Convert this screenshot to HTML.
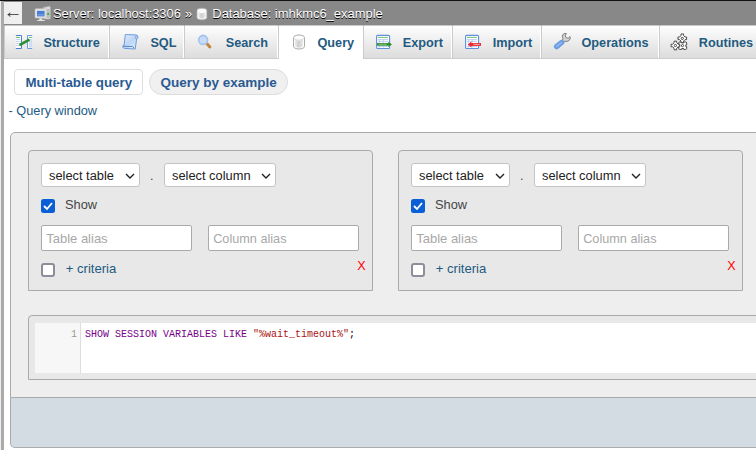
<!DOCTYPE html>
<html><head><meta charset="utf-8">
<style>
*{box-sizing:border-box;}
html,body{margin:0;padding:0;}
body{width:756px;height:450px;overflow:hidden;background:#fff;font-family:"Liberation Sans",sans-serif;font-size:12.6px;color:#444;position:relative;}
#topline{position:absolute;left:0;top:0;width:756px;height:1px;background:#111;}
#leftstrip{position:absolute;left:0;top:1px;width:4px;height:449px;background:#aaa;border-left:1px solid #eee;}
#hdr{position:absolute;left:4px;top:1px;width:752px;height:24px;background:#888;color:#fff;}
#back{position:absolute;left:0;top:1px;width:18px;height:22px;background:#efefef;color:#333;font-size:19px;line-height:22px;text-align:center;overflow:hidden;}
#back span{position:absolute;left:-1px;top:-1px;width:20px;}
.cr{position:absolute;top:0;transform:translateY(.6px);height:24px;line-height:24px;font-size:12.85px;white-space:nowrap;text-shadow:0 1px 0 #000;}
#tabs{position:absolute;left:4px;top:25px;width:752px;height:34px;background:linear-gradient(#fff,#dcdcdc);border-bottom:1px solid #ccc;}
#hline{position:absolute;left:4px;top:25px;width:752px;height:1px;background:rgba(136,136,136,.45);}
.tab{position:absolute;top:0;height:33px;border-left:1px solid #ccc;border-right:1px solid #fff;}
.tab.act{background:#fff;height:34px;}
.tab span{position:absolute;top:0;transform:translateY(.6px);color:#235a81;font-weight:bold;font-size:12.7px;line-height:34px;white-space:nowrap;}
.ic{position:absolute;}
.btn{position:absolute;top:69px;height:26px;border:1px solid #ddd;font-weight:bold;color:#2a5a92;font-size:13.35px;line-height:26px;white-space:nowrap;}
.btn span{position:absolute;top:0;}
#b1{left:14px;width:129px;background:#fff;border-radius:4px;}
#b2{left:149px;width:139px;background:#f0f0f0;border-radius:13px;}
#qw{position:absolute;left:8.500px;top:102px;font-size:12.75px;color:#235a81;line-height:17px;white-space:nowrap;}
#fs{position:absolute;left:10px;top:132px;width:760px;height:266px;background:#eee;border:1px solid #aaa;border-radius:5px 0 0 0;}
#foot{position:absolute;left:10px;top:398px;width:760px;height:50px;background:#d3dce3;border:1px solid #aaa;border-top:0;border-radius:0 0 0 5px;}
.box{position:absolute;top:150px;width:345px;height:141px;background:#e8e8e8;border:1px solid #aaa;border-radius:4px 4px 0 0;}
.sel{position:absolute;top:12px;height:24px;background:#fff;border:1px solid #c4c4c4;border-radius:3px;font-size:12.85px;line-height:24px;color:#222;padding-left:7px;white-space:nowrap;}
.sel svg{position:absolute;right:4.300px;top:8.500px;}
.dot{position:absolute;top:18px;left:121px;font-size:12.6px;color:#444;}
.cb{position:absolute;left:12px;width:14px;height:14px;border-radius:2.5px;}
.cb.on{background:#0b5fd6;top:48px;}
.cb.off{background:#fff;border:2px solid #8f8c9c;border-radius:3px;top:112px;}
.lbl{position:absolute;left:36px;font-size:12.8px;line-height:16px;white-space:nowrap;}
.inp{position:absolute;top:74px;width:151px;height:26px;background:#fff;border:1px solid #aaa;border-radius:2px;font-size:13px;line-height:26px;color:#a8a8a8;padding-left:4.200px;}
.x{position:absolute;left:328.300px;top:107px;color:#f00;font-size:12.6px;line-height:16px;}
#cm{position:absolute;left:28px;top:315px;width:760px;height:65px;background:#e8e8e8;border:1px solid #aaa;border-radius:4px 0 0 0;}
#cm .in{position:absolute;left:6px;top:7px;width:760px;height:50px;background:#fff;}
#cm .gut{position:absolute;left:0;top:0;width:46px;height:50px;background:#f7f7f7;border-right:1px solid #ddd;}
#cm .ln{position:absolute;left:0;top:5px;width:42px;text-align:right;font-family:"Liberation Mono",monospace;font-size:10px;color:#999;line-height:13px;}
#cm .code{position:absolute;left:50px;top:5px;font-family:"Liberation Mono",monospace;font-size:10px;line-height:13px;white-space:pre;color:#000;}
.kw{color:#708;}.st{color:#a11;}
</style></head><body>
<div id="topline"></div>
<div id="leftstrip"></div>
<div id="hdr">
 <div id="back"><span>←</span></div>
 <div class="cr" id="c1" style="left:49px">Server: localhost:3306</div>
 <div class="cr" id="c2" style="left:181px">»</div>
 <div class="cr" id="c3" style="left:208.300px;font-size:12.95px">Database: imhkmc6_example</div>
</div>
<div id="tabs">
 <div class="tab" style="left:0px;width:105px"><span style="left:38.4px">Structure</span></div>
 <div class="tab" style="left:105px;width:75px"><span style="left:40.4px">SQL</span></div>
 <div class="tab" style="left:180px;width:94px"><span style="left:40.7px">Search</span></div>
 <div class="tab act" style="left:274px;width:85px"><span style="left:38.5px">Query</span></div>
 <div class="tab" style="left:359px;width:89px"><span style="left:38.7px">Export</span></div>
 <div class="tab" style="left:448px;width:89px"><span style="left:39.7px">Import</span></div>
 <div class="tab" style="left:537px;width:118px"><span style="left:39.5px">Operations</span></div>
 <div class="tab" style="left:655px;width:101px"><span style="left:38.8px">Routines</span></div>
</div>
<div id="hline"></div>
<div class="btn" id="b1"><span style="left:10.400px">Multi-table query</span></div>
<div class="btn" id="b2"><span style="left:10.500px;font-size:13.5px">Query by example</span></div>
<div id="qw">- Query window</div>
<div id="fs"></div>
<div id="foot"></div>

<div class="box" style="left:28px">
 <div class="sel" style="left:12px;width:99px">select table<svg width="10" height="6" viewBox="0 0 10 6"><path d="M1 1l4 4 4-4" fill="none" stroke="#222" stroke-width="1.4"/></svg></div>
 <div class="dot">.</div>
 <div class="sel" style="left:135px;width:112px">select column<svg width="10" height="6" viewBox="0 0 10 6"><path d="M1 1l4 4 4-4" fill="none" stroke="#222" stroke-width="1.4"/></svg></div>
 <div class="cb on"><svg width="14" height="14" viewBox="0 0 14 14"><path d="M3 7l3 3 5-6" fill="none" stroke="#fff" stroke-width="1.8"/></svg></div>
 <div class="lbl" style="top:46px">Show</div>
 <div class="inp" style="left:12px">Table alias</div>
 <div class="inp" style="left:179px;font-size:12.7px">Column alias</div>
 <div class="cb off"></div>
 <div class="lbl" style="top:110px;left:36.700px;font-size:13.1px;color:#235a81">+ criteria</div>
 <div class="x">X</div>
</div>
<div class="box" style="left:398px">
 <div class="sel" style="left:12px;width:99px">select table<svg width="10" height="6" viewBox="0 0 10 6"><path d="M1 1l4 4 4-4" fill="none" stroke="#222" stroke-width="1.4"/></svg></div>
 <div class="dot">.</div>
 <div class="sel" style="left:135px;width:112px">select column<svg width="10" height="6" viewBox="0 0 10 6"><path d="M1 1l4 4 4-4" fill="none" stroke="#222" stroke-width="1.4"/></svg></div>
 <div class="cb on"><svg width="14" height="14" viewBox="0 0 14 14"><path d="M3 7l3 3 5-6" fill="none" stroke="#fff" stroke-width="1.8"/></svg></div>
 <div class="lbl" style="top:46px">Show</div>
 <div class="inp" style="left:12px">Table alias</div>
 <div class="inp" style="left:179px;font-size:12.7px">Column alias</div>
 <div class="cb off"></div>
 <div class="lbl" style="top:110px;left:36.700px;font-size:13.1px;color:#235a81">+ criteria</div>
 <div class="x">X</div>
</div>
<div id="cm"><div class="in"><div class="gut"></div><div class="ln">1</div><div class="code"><span class="kw">SHOW SESSION VARIABLES LIKE</span> <span class="st">"%wait_timeout%"</span>;</div></div></div>
<svg id="icons" width="756" height="450" viewBox="0 0 756 450" style="position:absolute;left:0;top:0;pointer-events:none">
<defs>
<linearGradient id="gcyl" x1="0" x2="1" y1="0" y2="0"><stop offset="0" stop-color="#f4f4f4"/><stop offset=".5" stop-color="#d8d8d8"/><stop offset="1" stop-color="#f0f0f0"/></linearGradient>
<linearGradient id="gpap" x1="0" x2="1" y1="0" y2="1"><stop offset="0" stop-color="#e8f1fc"/><stop offset=".5" stop-color="#bcd5f5"/><stop offset="1" stop-color="#e4eefb"/></linearGradient>
<linearGradient id="gcyl2" x1="0" x2="1" y1="0" y2="0"><stop offset="0" stop-color="#ececec"/><stop offset=".45" stop-color="#cfcfcf"/><stop offset="1" stop-color="#e9e9e9"/></linearGradient>
</defs>
<!-- back arrow -->
<!-- server icon -->
<g>
<path d="M43.5 7.5L49.5 6.3L50.3 7V18.5L49.5 19H44Z" fill="#d9d9d9" stroke="#b5b5b5" stroke-width=".6"/>
<rect x="47" y="9" width="2.6" height="9" fill="#bdbdbd"/>
<rect x="47.2" y="13" width="2" height="2" fill="#3fae49"/>
<rect x="35" y="8.7" width="11.2" height="9.4" rx="1" fill="#e6e6e6" stroke="#bcbcbc" stroke-width=".6"/>
<rect x="37" y="10.8" width="7.6" height="5.6" fill="#4a80d4"/>
<rect x="37.6" y="14" width="6.4" height="1.6" fill="#6c99e0"/>
<path d="M39.6 18.2h2.4l.6 1.8h2v.9h-7.4v-.9h1.8z" fill="#e2e2e2"/>
</g>
<!-- db icon header -->
<g>
<path d="M197 10.500v7.100c0 1.300 2.200 2.200 4.900 2.200s4.900-.9 4.900-2.200v-7.100c0-1.300-2.200-2.200-4.900-2.200s-4.900.9-4.900 2.200z" fill="#fbfbfb" stroke="#b4b4b4" stroke-width=".8"/>
<path d="M198.300 12c.9.800 2.200 1.200 3.600 1.200s2.700-.4 3.600-1.200v5.500c-.9.800-2.200 1.100-3.600 1.100s-2.700-.3-3.600-1.100z" fill="url(#gcyl2)"/>
</g>
<!-- structure icon -->
<g>
<path d="M15.800 35.500h5.700v13h-5.700" fill="#fff" stroke="#4a7fcf" stroke-width="1"/>
<path d="M32.200 35.500h-4.700v13h4.700" fill="#fff" stroke="#6f9be0" stroke-width="1"/>
<path d="M16 37.400h4M29 37.400h3.200" stroke="#6fb66a" stroke-width="1"/>
<path d="M16 39.500h4.500M16 41.500h4.500M16 43.500h4.500M16 45.500h4.500" stroke="#b9d0f2" stroke-width=".9"/>
<path d="M29 39h3.200v8.500h-3.200z" fill="#c6d9f5"/>
<path d="M30.200 40v1M30.200 42.300v1M30.200 44.600v1" stroke="#fff" stroke-width="1"/>
<path d="M20.700 44.500L28.300 40.300" stroke="#2f8f2f" stroke-width="2.700" stroke-linecap="square"/>
</g>
<!-- sql icon -->
<g>
<path d="M125.300 34.600L136 34.900q2 .2 2 2.300q0 1.800-1.400 1.800L135.200 49l-10.500-.600q-2-.2-2-1.800q0-1.200 1.400-1.300z" fill="url(#gpap)" stroke="#5d92dc" stroke-width=".9" stroke-linejoin="round"/>
<path d="M123.200 46.200l9.500.5q1 .2 .8 1.400" fill="#fff" stroke="#3f74c4" stroke-width=".9"/>
<path d="M136.300 35.500q-.9 1.200-.5 3.300" fill="none" stroke="#5d92dc" stroke-width=".8"/>
</g>
<!-- search icon -->
<g>
<path d="M207 43.800L209.900 46.900" stroke="#c1863a" stroke-width="3" stroke-linecap="round"/>
<circle cx="203.100" cy="39.900" r="4.400" fill="#c9dcf7" stroke="#a4c4ef" stroke-width="1.800"/>
</g>
<!-- query icon (db) -->
<g>
<path d="M293.500 37.600v8.800c0 1.500 2.500 2.600 5.500 2.600s5.500-1.100 5.500-2.600v-8.800c0-1.500-2.500-2.600-5.500-2.600s-5.500 1.100-5.500 2.600z" fill="#fdfdfd" stroke="#a2a2a2" stroke-width=".9"/>
<path d="M295 39.300c1 1 2.400 1.400 4 1.400s3-.4 4-1.400v6.900c-1 .9-2.400 1.300-4 1.300s-3-.4-4-1.300z" fill="url(#gcyl2)"/>
<path d="M293.600 37.800c.3 1.300 2.600 2.300 5.400 2.300s5.100-1 5.400-2.300" fill="none" stroke="#c4c4c4" stroke-width=".6"/>
</g>
<!-- export icon -->
<g>
<rect x="376.600" y="35.400" width="13" height="13.100" rx="1" fill="#fff" stroke="#5d90dc" stroke-width="1.100"/>
<path d="M378 37.400h9.800" stroke="#76bb70" stroke-width="1"/>
<path d="M378 39.600h10M378 41.400h10M378 46.600h10M379.400 39.600v8M383.200 39.600v8" stroke="#b4cdf2" stroke-width=".9"/>
<path d="M377 44.400h11.500" stroke="#2d8a2d" stroke-width="2.600"/>
<path d="M388.200 41.800l3.800 2.600-3.800 2.600z" fill="#2d8a2d"/>
<path d="M378.500 44.400h8" stroke="#9fd59a" stroke-width=".7"/>
</g>
<!-- import icon -->
<g>
<rect x="465.600" y="35.400" width="13" height="13.100" rx="1" fill="#fff" stroke="#5d90dc" stroke-width="1.100"/>
<path d="M467 37.400h9.800" stroke="#76bb70" stroke-width="1"/>
<path d="M467 39.600h10M467 41.400h10M467 46.600h10M468.400 39.600v8M472.200 39.600v8" stroke="#b4cdf2" stroke-width=".9"/>
<path d="M471 44.500h10" stroke="#e8262c" stroke-width="2.800"/>
<path d="M471.400 41.600l-3.600 2.900 3.600 2.900z" fill="#e8262c"/>
<path d="M473.500 44.500h6.300" stroke="#f9b9bb" stroke-width=".8"/>
</g>
<!-- operations icon (wrench) -->
<g>
<path d="M561.800 41.400l1.300-2.600q-1.700-2.600 0-4.500q1.400-1.300 3.200-.8l-1.200 2.500l1.200 1.900l2.200.2l1.600-1.500q.6 2.300-1 3.800q-2 1.700-4.500.7l-1.300 2z" fill="#d6d6d6" stroke="#7c7c7c" stroke-width="1" stroke-linejoin="round"/>
<path d="M556.600 46.600L561.600 42.500" stroke="#6b9be3" stroke-width="5.400" stroke-linecap="round"/>
<path d="M556.800 46.400L561.200 42.800" stroke="#94b6ee" stroke-width="1.800" stroke-linecap="round"/>
</g>
<!-- routines icon (gears) -->
<g fill="#fff" stroke="#484848" stroke-width="1" stroke-linejoin="round">
<path d="M679.70 42.00H681.80 V42.90 H683.60 V42.00H685.70Q686.70 42.00 686.70 43.00V44.80 H685.80 V46.60 H686.70V48.40Q686.70 49.40 685.70 49.40H683.60 V48.50 H681.80 V49.40H679.70Q678.70 49.40 678.70 48.40V46.60 H679.60 V44.80 H678.70V43.00Q678.70 42.00 679.70 42.00z"/><path d="M683.66 40.97L683.56 42.62L681.04 42.62L680.94 40.97L679.63 39.66L677.98 39.56L677.98 37.04L679.63 36.94L680.94 35.63L681.04 33.98L683.56 33.98L683.66 35.63L684.97 36.94L686.62 37.04L686.62 39.56L684.97 39.66z"/><path d="M676.76 48.17L676.66 49.82L674.14 49.82L674.04 48.17L672.73 46.86L671.08 46.76L671.08 44.24L672.73 44.14L674.04 42.83L674.14 41.18L676.66 41.18L676.76 42.83L678.07 44.14L679.72 44.24L679.72 46.76L678.07 46.86z"/>
<circle cx="682.3" cy="38.400" r="1.100"/><circle cx="675.400" cy="45.500" r="1.100"/><circle cx="682.500" cy="45.600" r="1.100"/>
</g>
</svg>
</body></html>
